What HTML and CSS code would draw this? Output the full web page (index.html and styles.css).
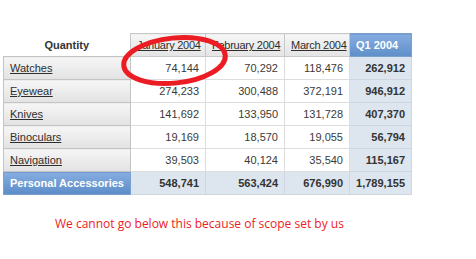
FILE: index.html
```html
<!DOCTYPE html>
<html>
<head>
<meta charset="utf-8">
<link rel="stylesheet" href="styles.css">
</head>
<body>
<div class="page">
  <div class="grid-wrap">
    <table class="grid">
      <colgroup>
        <col class="c-label"><col class="c-jan"><col class="c-feb"><col class="c-mar"><col class="c-q1">
      </colgroup>
      <thead>
        <tr>
          <th class="corner">Quantity</th>
          <th class="colhead"><span class="lnk">January 2004</span></th>
          <th class="colhead"><span class="lnk">February 2004</span></th>
          <th class="colhead"><span class="lnk">March 2004</span></th>
          <th class="colhead total">Q1 2004</th>
        </tr>
      </thead>
      <tbody>
        <tr><th class="rowhead"><span class="lnk">Watches</span></th><td>74,144</td><td>70,292</td><td>118,476</td><td class="sum">262,912</td></tr>
        <tr><th class="rowhead"><span class="lnk">Eyewear</span></th><td>274,233</td><td>300,488</td><td>372,191</td><td class="sum">946,912</td></tr>
        <tr><th class="rowhead"><span class="lnk">Knives</span></th><td>141,692</td><td>133,950</td><td>131,728</td><td class="sum">407,370</td></tr>
        <tr><th class="rowhead"><span class="lnk">Binoculars</span></th><td>19,169</td><td>18,570</td><td>19,055</td><td class="sum">56,794</td></tr>
        <tr><th class="rowhead"><span class="lnk">Navigation</span></th><td>39,503</td><td>40,124</td><td>35,540</td><td class="sum">115,167</td></tr>
        <tr class="totalrow"><th class="rowhead total">Personal Accessories</th><td class="sum">548,741</td><td class="sum">563,424</td><td class="sum">676,990</td><td class="sum">1,789,155</td></tr>
      </tbody>
    </table>
    <svg class="circle" width="120" height="60" viewBox="0 0 120 60">
      <ellipse cx="56.5" cy="27.5" rx="51" ry="22.5" fill="none" stroke="#ec1c24" stroke-width="5" transform="rotate(-6 56.5 27.5)"/>
    </svg>
  </div>
  <p class="note">We cannot go below this because of scope set by us</p>
</div>
</body>
</html>
```
FILE: styles.css
```css
html, body {
  margin: 0;
  padding: 0;
  background: #ffffff;
}
.page {
  padding: 33px 0 0 3px;
}
.grid-wrap {
  position: relative;
  width: 408px;
}
.grid {
  border-collapse: collapse;
  table-layout: fixed;
  width: 408px;
  font-family: "Liberation Sans", Arial, sans-serif;
  font-size: 11px;
  color: #333333;
}
.c-label { width: 127px; }
.c-jan { width: 75px; }
.c-feb { width: 79px; }
.c-mar { width: 65px; }
.c-q1 { width: 62px; }
.grid th, .grid td {
  height: 22px;
  padding: 0 6px;
  border: 1px solid #cfcfcf;
  white-space: nowrap;
}
.grid td {
  text-align: right;
  background: #ffffff;
  color: #3a3a3a;
  border-color: #dddddd;
}
.corner {
  border: none !important;
  background: none;
  font-weight: bold;
  text-align: center;
  color: #333333;
}
.colhead {
  text-align: right;
  font-weight: normal;
  letter-spacing: -0.25px;
  background: linear-gradient(#f6f6f6, #e4e4e4);
  border-color: #c8c8c8 !important;
}
.colhead.total {
  text-align: left;
  letter-spacing: 0;
  padding-left: 6px;
  color: #ffffff;
  font-weight: bold;
  background: linear-gradient(#85ace0, #5f8fc9);
  border-color: #7ca0cc !important;
}
.rowhead {
  text-align: left;
  font-weight: normal;
  padding-left: 6px;
  background: linear-gradient(#f6f6f6, #e2e2e2);
  border-color: #c4c4c4 !important;
}
.rowhead.total {
  color: #ffffff;
  font-weight: bold;
  background: linear-gradient(#86ade0, #5b8cc8);
  border-color: #7ca0cc !important;
}
.lnk {
  text-decoration: underline;
  color: #2e2e2e;
}
.grid td.sum {
  background: #dde5ef;
  font-weight: bold;
  color: #333333;
  border-color: #cfd6df;
}
.circle {
  position: absolute;
  left: 115px;
  top: 0;
  overflow: visible;
}
.note {
  margin: 20px 0 0 52px;
  font-family: "Open Sans", "Liberation Sans", sans-serif;
  font-size: 12px;
  color: #ec1c24;
}
```
